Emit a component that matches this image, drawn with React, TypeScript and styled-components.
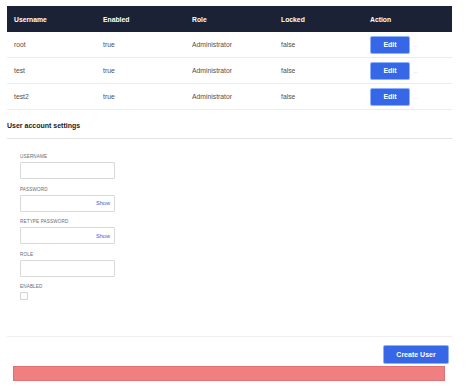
import styled, { createGlobalStyle } from "styled-components";

const GlobalStyle = createGlobalStyle`
  html, body {
    margin: 0;
    padding: 0;
    background: #ffffff;
    font-family: "Liberation Sans", Arial, sans-serif;
  }
`;

const Page = styled.div`
  width: 474px;
  height: 388px;
  padding: 6px 22px 0 7px;
  box-sizing: border-box;
  overflow: hidden;
`;

const Table = styled.div`
  width: 445px;
`;

const Row = styled.div<{ $head?: boolean }>`
  display: grid;
  grid-template-columns: repeat(5, 89px);
  align-items: center;
  height: 26px;
  box-sizing: border-box;
  background: ${(p) => (p.$head ? "#1b2236" : "#ffffff")};
  color: ${(p) => (p.$head ? "#ffffff" : "#4f4f4f")};
  font-size: 6.8px;
  font-weight: ${(p) => (p.$head ? 700 : 400)};
  border-bottom: ${(p) => (p.$head ? "none" : "1px solid #ececec")};
`;

const Cell = styled.div`
  display: flex;
  align-items: center;
  gap: 3px;
  padding-left: 7px;
`;

const BlueButton = styled.button<{ $w: number; $h: number }>`
  width: ${(p) => p.$w}px;
  height: ${(p) => p.$h}px;
  border: 1px solid #8fb0ff;
  border-radius: 2px;
  background: #3567e6;
  color: #ffffff;
  font-family: "Liberation Sans", Arial, sans-serif;
  font-size: 7px;
  font-weight: 700;
  padding: 0;
  cursor: pointer;
`;

const Dots = styled.span`
  color: #cccccc;
  font-size: 6px;
`;

const SectionTitle = styled.div`
  font-size: 7px;
  font-weight: 700;
  color: #222;
  padding: 12px 0 9px;
  border-bottom: 1px solid #e2e2e2;
  width: 445px;
`;

const Form = styled.div`
  display: flex;
  flex-direction: column;
  padding: 15px 0 0 13px;
  height: 198px;
  box-sizing: border-box;
  border-bottom: 1px solid #efefef;
  width: 445px;
`;

const FormInner = styled.div`
  display: flex;
  flex-direction: column;
  gap: 7.6px;
`;

const Field = styled.div`
  display: flex;
  flex-direction: column;
  gap: 2px;
`;

const Label = styled.label`
  font-size: 4.6px;
  line-height: 6px;
  color: #6b6b6b;
  letter-spacing: 0.15px;
  text-transform: uppercase;
`;

const InputBox = styled.div`
  width: 95px;
  height: 17px;
  border: 1px solid #d9d9d9;
  border-radius: 1px;
  box-sizing: border-box;
  display: flex;
  align-items: center;
  justify-content: flex-end;
  padding-right: 4px;
`;

const ShowLink = styled.span`
  color: #3b64d6;
  font-size: 5.6px;
`;

const Checkbox = styled.div`
  width: 8px;
  height: 8px;
  border: 1px solid #d2d2d2;
  border-radius: 1px;
  box-sizing: border-box;
`;

const Footer = styled.div`
  display: flex;
  justify-content: flex-end;
  padding: 8px 0 0 0;
  width: 442px;
`;

const ErrorBar = styled.div`
  margin: 2px 0 0 6px;
  width: 432px;
  height: 15px;
  background: #f08080;
  border: 1px solid #e27070;
  box-sizing: border-box;
`;

const users = [
  { name: "root", enabled: "true", role: "Administrator", locked: "false" },
  { name: "test", enabled: "true", role: "Administrator", locked: "false" },
  { name: "test2", enabled: "true", role: "Administrator", locked: "false" },
];

const fields = [
  { label: "Username", show: false },
  { label: "Password", show: true },
  { label: "Retype password", show: true },
  { label: "Role", show: false },
];

export default function App() {
  return (
    <Page>
      <GlobalStyle />
      <Table>
        <Row $head>
          <Cell>Username</Cell>
          <Cell>Enabled</Cell>
          <Cell>Role</Cell>
          <Cell>Locked</Cell>
          <Cell>Action</Cell>
        </Row>
        {users.map((u) => (
          <Row key={u.name}>
            <Cell>{u.name}</Cell>
            <Cell>{u.enabled}</Cell>
            <Cell>{u.role}</Cell>
            <Cell>{u.locked}</Cell>
            <Cell>
              <BlueButton $w={40} $h={18}>Edit</BlueButton>
              <Dots>...</Dots>
            </Cell>
          </Row>
        ))}
      </Table>
      <SectionTitle>User account settings</SectionTitle>
      <Form>
        <FormInner>
          {fields.map((f) => (
            <Field key={f.label}>
              <Label>{f.label}</Label>
              <InputBox>{f.show && <ShowLink>Show</ShowLink>}</InputBox>
            </Field>
          ))}
          <Field>
            <Label>Enabled</Label>
            <Checkbox />
          </Field>
        </FormInner>
      </Form>
      <Footer>
        <BlueButton $w={66} $h={19}>Create User</BlueButton>
      </Footer>
      <ErrorBar />
    </Page>
  );
}
